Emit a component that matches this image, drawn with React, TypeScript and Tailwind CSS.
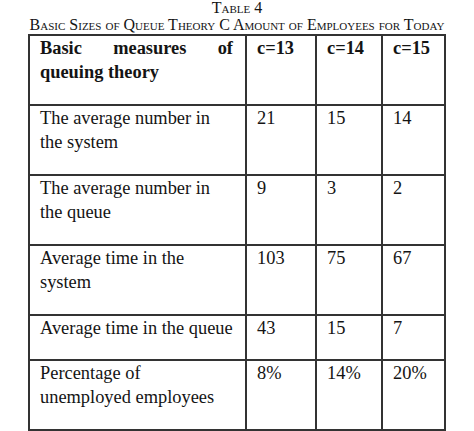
const rows = [
  { label: ["The average number in", "the system"], values: ["21", "15", "14"], tall: true },
  { label: ["The average number in", "the queue"], values: ["9", "3", "2"], tall: true },
  { label: ["Average time in the", "system"], values: ["103", "75", "67"], tall: true },
  { label: ["Average time in the queue"], values: ["43", "15", "7"], tall: false },
  { label: ["Percentage of", "unemployed employees"], values: ["8%", "14%", "20%"], tall: true },
];

export default function App() {
  return (
    <div className="w-[474px] h-[431px] bg-white text-[#141414] font-['Liberation_Serif','Times_New_Roman',serif] overflow-hidden">
      <div className="text-center text-[16px] [font-variant:small-caps]">
        <div className="leading-[16px]">Table 4</div>
        <div className="leading-[18px] whitespace-nowrap">
          Basic Sizes of Queue Theory C Amount of Employees for Today
        </div>
      </div>

      <table className="mx-auto w-[416px] border-collapse table-fixed text-[18.4px] leading-[24px]">
        <colgroup>
          <col className="w-[217px]" />
          <col className="w-[70px]" />
          <col className="w-[66px]" />
          <col className="w-[63px]" />
        </colgroup>
        <thead>
          <tr className="h-[70px]">
            <th className="border-2 border-[#333] pl-[10px] pr-[12px] pt-0 align-top text-justify font-bold">
              Basic measures of queuing theory
            </th>
            {["c=13", "c=14", "c=15"].map((c) => (
              <th key={c} className="border-2 border-[#333] pl-[10px] pt-0 align-top text-left font-bold">
                {c}
              </th>
            ))}
          </tr>
        </thead>
        <tbody>
          {rows.map((r) => (
            <tr key={r.label.join(" ")} className={r.tall ? "h-[70px]" : "h-[45px]"}>
              <td className="border-2 border-[#333] pl-[10px] pr-[12px] pt-0 align-top">
                {r.label.map((line) => (
                  <div key={line} className="whitespace-nowrap">
                    {line}
                  </div>
                ))}
              </td>
              {r.values.map((v, i) => (
                <td key={i} className="border-2 border-[#333] pl-[10px] pt-0 align-top">
                  {v}
                </td>
              ))}
            </tr>
          ))}
        </tbody>
      </table>
    </div>
  );
}
